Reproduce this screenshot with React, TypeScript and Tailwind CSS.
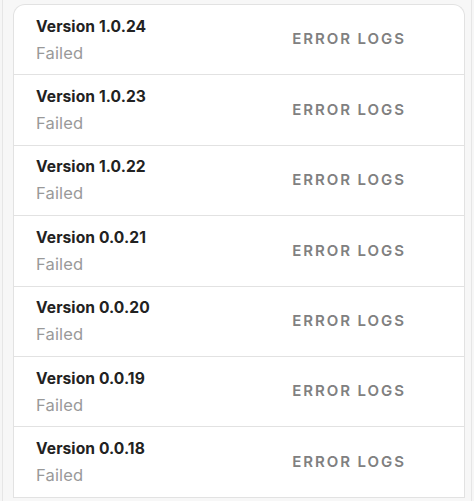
import React from "react";

const versions = ["1.0.24", "1.0.23", "1.0.22", "0.0.21", "0.0.20", "0.0.19", "0.0.18"];

export default function App() {
  return (
    <div className="h-[501px] w-[474px] overflow-hidden bg-[#f6f6f6]" style={{ fontFamily: "Inter, 'Noto Sans', sans-serif" }}>
      <div className="ml-[2px] mr-[2px] h-full border-l border-r border-[#e6e6e6] bg-[#f7f7f7] pl-[10px] pr-[6px] pt-[4px]">
        <div className="w-[452px] rounded-t-[12px] border border-b-0 border-[#e2e2e2] bg-white">
          {versions.map((v) => (
            <div key={v} className="flex h-[70.4px] items-center border-b border-[#e2e2e2] pl-[22px]">
              <div className="flex flex-col">
                <span className="text-[15.6px] font-bold leading-[27px] tracking-[0.005em] text-[#222222]">Version {v}</span>
                <span className="text-[16.5px] leading-[27px] tracking-[0.01em] text-[#999999]">Failed</span>
              </div>
              <span className="ml-auto mr-[58px] text-[15px] font-semibold tracking-[0.13em] text-[#808080]">ERROR LOGS</span>
            </div>
          ))}
        </div>
      </div>
    </div>
  );
}
